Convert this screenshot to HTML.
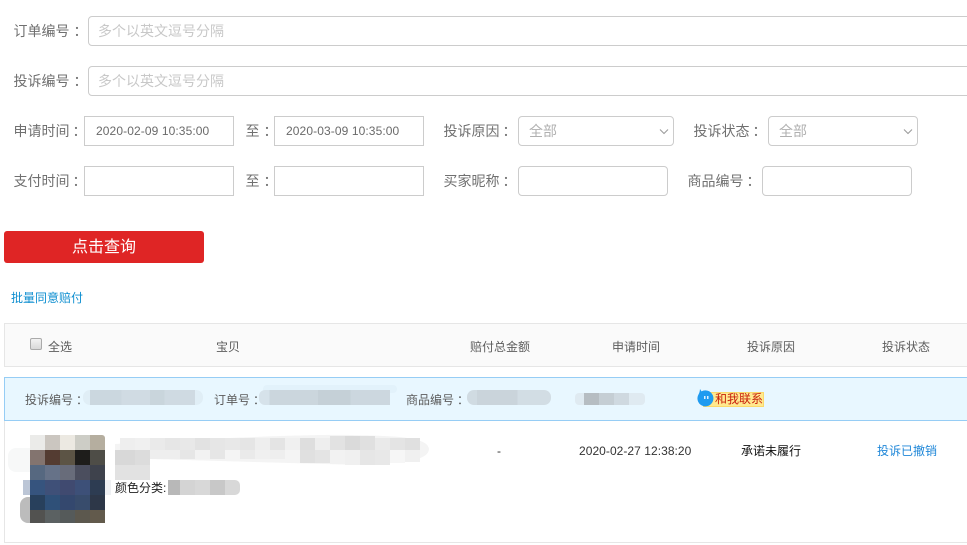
<!DOCTYPE html>
<html lang="zh">
<head>
<meta charset="utf-8">
<title>投诉</title>
<style>
html,body{margin:0;padding:0;background:#fff;}
body{position:relative;width:967px;height:545px;overflow:hidden;font-family:"Liberation Sans","Noto Sans CJK SC",sans-serif;font-size:12px;color:#5c5c5c;}
.a{position:absolute;white-space:nowrap;}
.t{position:absolute;white-space:nowrap;line-height:20px;height:20px;}
.l{font-size:14px;color:#707070;margin-left:-.5px;}
.c{font-family:"Noto Sans CJK TC",sans-serif;position:relative;left:4px;}
.s{position:relative;left:3px;}
.box{position:absolute;box-sizing:border-box;border:1px solid #ccc;background:#fff;}
.r{border-radius:4px;}
.in{font-size:12px;color:#6a6a6a;line-height:28px;padding-left:11px;letter-spacing:.1px;}
.ph{font-size:14px;color:#c8c8c8;line-height:28px;padding-left:9px;}
.sel{font-size:14px;color:#b0b0b0;line-height:28px;padding-left:10px;}
.m{position:absolute;width:15px;height:15px;}
</style>
</head>
<body>
<div class="t l" style="left:14px;top:21px;">订单编号<span class="c">：</span></div>
<div class="box r ph" style="left:88px;top:16px;width:890px;height:30px;">多个以英文逗号分隔</div>
<div class="t l" style="left:14px;top:71px;">投诉编号<span class="c">：</span></div>
<div class="box r ph" style="left:88px;top:66px;width:890px;height:30px;">多个以英文逗号分隔</div>

<div class="t l" style="left:14px;top:121px;">申请时间<span class="c" style="left:3px;">：</span></div>
<div class="box in" style="left:84px;top:116px;width:150px;height:30px;">2020-02-09 10:35:00</div>
<div class="t l" style="left:246px;top:121px;">至<span class="c">：</span></div>
<div class="box in" style="left:274px;top:116px;width:150px;height:30px;">2020-03-09 10:35:00</div>
<div class="t l" style="left:444px;top:121px;">投诉原因<span class="c" style="left:3px;">：</span></div>
<div class="box r sel" style="left:518px;top:116px;width:156px;height:30px;">全部
<svg style="position:absolute;right:3px;top:11px;" width="12" height="8" viewBox="0 0 12 8"><path d="M2 1.5 L6 5.5 L10 1.5" fill="none" stroke="#999" stroke-width="1"/></svg></div>
<div class="t l" style="left:694px;top:121px;">投诉状态<span class="c" style="left:3px;">：</span></div>
<div class="box r sel" style="left:768px;top:116px;width:150px;height:30px;">全部
<svg style="position:absolute;right:3px;top:11px;" width="12" height="8" viewBox="0 0 12 8"><path d="M2 1.5 L6 5.5 L10 1.5" fill="none" stroke="#999" stroke-width="1"/></svg></div>

<div class="t l" style="left:14px;top:171px;">支付时间<span class="c" style="left:3px;">：</span></div>
<div class="box" style="left:84px;top:166px;width:150px;height:30px;"></div>
<div class="t l" style="left:246px;top:171px;">至<span class="c">：</span></div>
<div class="box" style="left:274px;top:166px;width:150px;height:30px;"></div>
<div class="t l" style="left:444px;top:171px;">买家昵称<span class="c" style="left:3px;">：</span></div>
<div class="box r" style="left:518px;top:166px;width:150px;height:30px;"></div>
<div class="t l" style="left:688px;top:171px;">商品编号<span class="c" style="left:3px;">：</span></div>
<div class="box r" style="left:762px;top:166px;width:150px;height:30px;"></div>

<div class="a" style="left:4px;top:231px;width:200px;height:32px;background:#df2525;border-radius:3px;color:#fff;font-size:16px;line-height:34px;text-align:center;">点击查询</div>
<div class="t" style="left:11px;top:288px;color:#0d8ed0;font-size:12px;">批量同意赔付</div>

<div class="box" style="left:4px;top:323px;width:975px;height:44px;background:#fafafa;border-color:#e6e6e6;"></div>
<div class="a" style="left:30px;top:338px;width:12px;height:12px;box-sizing:border-box;border:1px solid #aaa;border-radius:2px;background:linear-gradient(#f2f2f2,#d8d8d8);"></div>
<div class="t" style="left:48px;top:337px;">全选</div>
<div class="t" style="left:216px;top:337px;">宝贝</div>
<div class="t" style="left:470px;top:337px;">赔付总金额</div>
<div class="t" style="left:612px;top:337px;">申请时间</div>
<div class="t" style="left:747px;top:337px;">投诉原因</div>
<div class="t" style="left:882px;top:337px;">投诉状态</div>

<div class="box" style="left:4px;top:420px;width:975px;height:123px;border-color:#e6e6e6;border-top:none;"></div>
<div class="box" style="left:4px;top:377px;width:975px;height:44px;background:#e8f7ff;border-color:#96cdf5;"></div>
<div class="t" style="left:25px;top:390px;">投诉编号<span class="c s">：</span></div>
<div class="a" style="left:83px;top:390px;width:120px;height:15px;background:#e0eef6;border-radius:7px;"></div>
<div class="a" style="left:90px;top:390px;width:105px;height:15px;background:linear-gradient(90deg,#cbd7df 0 30%,#d0dbe3 30% 57%,#c9d5dc 57% 71%,#cfdae2 71%);"></div>
<div class="a" style="left:263px;top:385px;width:134px;height:8px;background:#e2f2fb;border-radius:4px;"></div>
<div class="t" style="left:214px;top:390px;">订单号<span class="c s">：</span></div>
<div class="a" style="left:259px;top:390px;width:131px;height:15px;background:linear-gradient(90deg,#d6e2ea 0 8%,#cbd6dd 8% 45%,#c5d0d7 45% 70%,#ccd7df 70%);border-radius:6px 0 0 6px;"></div>
<div class="t" style="left:406px;top:390px;">商品编号<span class="c s">：</span></div>
<div class="a" style="left:467px;top:390px;width:84px;height:15px;background:linear-gradient(90deg,#d0dbe2 0 12%,#cad4db 12% 60%,#d2dde4 60%);border-radius:7px;"></div>
<div class="a" style="left:575px;top:393px;width:70px;height:12px;background:#dfeaf1;border-radius:4px;"></div>
<div class="a" style="left:584px;top:393px;width:15px;height:12px;background:#b6bdc2;"></div>
<div class="a" style="left:599px;top:393px;width:15px;height:12px;background:#c5ced4;"></div>
<div class="a" style="left:614px;top:393px;width:15px;height:12px;background:#cfd9e0;"></div>

<div class="a" style="left:703px;top:392px;width:61px;height:15px;box-sizing:border-box;background:#ffe98f;border:1px solid #fbd96a;"></div>
<div class="a" style="left:715px;top:391px;font-size:12px;line-height:17px;color:#c8200c;">和我联系</div>
<svg class="a" style="left:696px;top:388px;" width="18" height="19" viewBox="0 0 18 19"><path d="M4 1 L5.5 3.4 A8 8 0 1 1 2.6 6.2 C3.6 4.6 3.8 3 4 1 Z" fill="#1f9bf0"/><rect x="8" y="8" width="1.5" height="3" fill="#dff1ff"/><rect x="11" y="8" width="1.5" height="3" fill="#dff1ff"/></svg>

<!-- smear -->
<svg class="a" style="left:0;top:425px;" width="440" height="75" viewBox="0 425 440 75" shape-rendering="crispEdges">
<path d="M115 444 C180 440 300 434 350 435 C390 436 428 436 429 449 C428 462 400 462 360 465 L150 459 L150 480 L115 480 Z" fill="#f4f4f4" shape-rendering="auto"/>
<rect x="120" y="438" width="15" height="12" fill="#eee"/><rect x="135" y="438" width="15" height="12" fill="#f0f0f0"/>
<rect x="150" y="438" width="15" height="12" fill="#eaeaea"/><rect x="165" y="438" width="15" height="12" fill="#e6e6e6"/>
<rect x="180" y="438" width="15" height="12" fill="#e8e8e8"/><rect x="195" y="438" width="15" height="12" fill="#e2e2e2"/>
<rect x="210" y="438" width="15" height="12" fill="#e6e6e6"/><rect x="225" y="438" width="15" height="12" fill="#e8e8e8"/>
<rect x="240" y="438" width="15" height="12" fill="#e5e5e5"/><rect x="255" y="438" width="15" height="12" fill="#eee"/>
<rect x="270" y="438" width="15" height="12" fill="#e4e4e4"/><rect x="285" y="438" width="15" height="12" fill="#f0f0f0"/>
<rect x="300" y="438" width="15" height="12" fill="#dedede"/><rect x="315" y="438" width="15" height="12" fill="#eee"/>
<rect x="330" y="436" width="15" height="14" fill="#e2e2e2"/><rect x="345" y="436" width="15" height="14" fill="#dadada"/>
<rect x="360" y="436" width="15" height="14" fill="#e0e0e0"/><rect x="375" y="438" width="15" height="12" fill="#eaeaea"/>
<rect x="390" y="438" width="15" height="12" fill="#e4e4e4"/><rect x="405" y="438" width="15" height="12" fill="#e0e0e0"/>
<rect x="115" y="450" width="20" height="15" fill="#d8d8d8"/><rect x="135" y="450" width="15" height="15" fill="#dcdcdc"/>
<rect x="150" y="450" width="30" height="9" fill="#eee"/><rect x="180" y="450" width="15" height="9" fill="#e6e6e6"/>
<rect x="195" y="450" width="15" height="9" fill="#f2f2f2"/><rect x="210" y="450" width="15" height="9" fill="#e6e6e6"/>
<rect x="225" y="450" width="15" height="9" fill="#f4f4f4"/><rect x="240" y="450" width="15" height="9" fill="#eaeaea"/>
<rect x="255" y="450" width="15" height="9" fill="#f0f0f0"/><rect x="270" y="450" width="15" height="9" fill="#eee"/>
<rect x="285" y="450" width="15" height="12" fill="#f4f4f4"/><rect x="300" y="450" width="15" height="13" fill="#e0e0e0"/>
<rect x="315" y="450" width="15" height="13" fill="#e4e4e4"/><rect x="330" y="450" width="15" height="14" fill="#f2f2f2"/>
<rect x="345" y="450" width="15" height="15" fill="#f0f0f0"/><rect x="360" y="450" width="15" height="15" fill="#e6e6e6"/>
<rect x="375" y="450" width="15" height="15" fill="#e8e8e8"/><rect x="390" y="450" width="15" height="13" fill="#f6f6f6"/>
<rect x="405" y="450" width="15" height="12" fill="#f0f0f0"/>
<rect x="115" y="465" width="35" height="15" fill="#e2e2e2"/>
</svg>

<!-- thumbnail mosaic -->
<div class="a" style="left:8px;top:448px;width:24px;height:24px;background:#f7f8f8;border-radius:8px 0 0 8px;"></div>
<div class="a" style="left:23px;top:480px;width:8px;height:15px;background:#bcc6d6;"></div>
<div class="a" style="left:105px;top:480px;width:6px;height:15px;background:#eef0f3;"></div>
<div class="a" style="left:20px;top:497px;width:12px;height:26px;background:#bcbcbc;border-radius:8px 0 0 8px;"></div>
<div class="m" style="left:30px;top:435px;background:#ebebe9;"></div>
<div class="m" style="left:45px;top:435px;background:#cbc6c0;"></div>
<div class="m" style="left:60px;top:435px;background:#ece9e2;"></div>
<div class="m" style="left:75px;top:435px;background:#cdcdc6;"></div>
<div class="m" style="left:90px;top:435px;background:#b5ae9f;border-radius:0 3px 0 0;"></div>
<div class="m" style="left:30px;top:450px;background:#83746f;"></div>
<div class="m" style="left:45px;top:450px;background:#543c32;"></div>
<div class="m" style="left:60px;top:450px;background:#5c5445;"></div>
<div class="m" style="left:75px;top:450px;background:#1e1d1b;"></div>
<div class="m" style="left:90px;top:450px;background:#4e4d47;"></div>
<div class="m" style="left:30px;top:465px;background:#566880;"></div>
<div class="m" style="left:45px;top:465px;background:#667288;"></div>
<div class="m" style="left:60px;top:465px;background:#686c7a;"></div>
<div class="m" style="left:75px;top:465px;background:#4b4e5e;"></div>
<div class="m" style="left:90px;top:465px;background:#3e424c;"></div>
<div class="m" style="left:30px;top:480px;background:#36547e;"></div>
<div class="m" style="left:45px;top:480px;background:#3f5078;"></div>
<div class="m" style="left:60px;top:480px;background:#404a70;"></div>
<div class="m" style="left:75px;top:480px;background:#3d5078;"></div>
<div class="m" style="left:90px;top:480px;background:#2d3c52;"></div>
<div class="m" style="left:30px;top:495px;background:#28405c;"></div>
<div class="m" style="left:45px;top:495px;background:#2f5078;"></div>
<div class="m" style="left:60px;top:495px;background:#34486e;"></div>
<div class="m" style="left:75px;top:495px;background:#384c6c;"></div>
<div class="m" style="left:90px;top:495px;background:#2d3748;"></div>
<div class="m" style="left:30px;top:510px;height:13px;background:#525250;"></div>
<div class="m" style="left:45px;top:510px;height:13px;background:#5b6162;"></div>
<div class="m" style="left:60px;top:510px;height:13px;background:#555a5a;"></div>
<div class="m" style="left:75px;top:510px;height:13px;background:#5c584e;"></div>
<div class="m" style="left:90px;top:510px;height:13px;background:#625a4c;"></div>

<div class="t" style="left:115px;top:478px;color:#222;">颜色分类:</div>
<div class="a" style="left:168px;top:480px;width:72px;height:15px;background:#d8d8d8;border-radius:5px;"></div>
<div class="a" style="left:168px;top:480px;width:12px;height:15px;background:#b8b8b8;"></div>
<div class="a" style="left:180px;top:480px;width:15px;height:15px;background:#d4d4d4;"></div>
<div class="a" style="left:210px;top:480px;width:15px;height:15px;background:#c8c8c8;"></div>

<div class="t" style="left:497px;top:441px;color:#333;">-</div>
<div class="t" style="left:579px;top:441px;color:#333;letter-spacing:.05px;">2020-02-27 12:38:20</div>
<div class="t" style="left:741px;top:441px;color:#111;">承诺未履行</div>
<div class="t" style="left:877px;top:441px;color:#1f87d8;">投诉已撤销</div>
</body>
</html>
